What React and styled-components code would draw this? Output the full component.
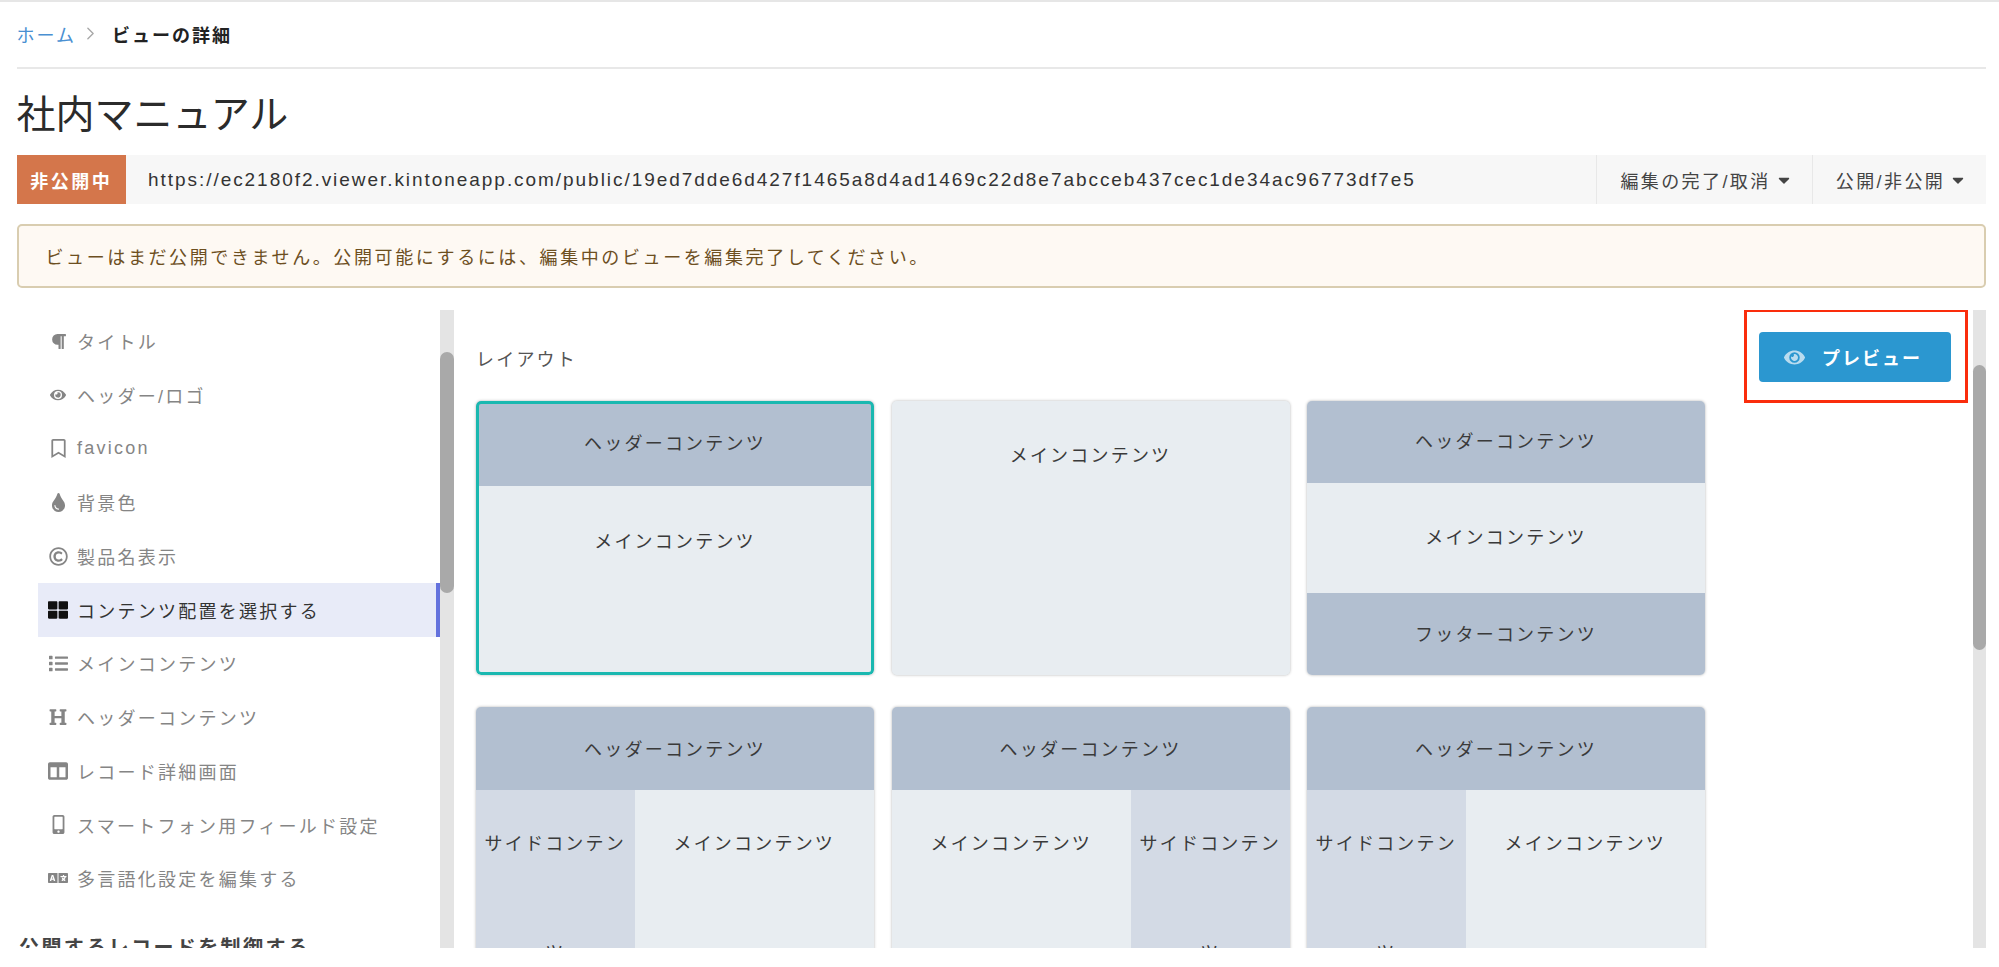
import React from 'react';
import styled, { createGlobalStyle } from 'styled-components';
import { ChevronRight } from 'lucide-react';
import {
  FaParagraph, FaEye, FaRegBookmark, FaTint, FaRegCopyright, FaThLarge,
  FaList, FaHeading, FaColumns, FaMobileAlt, FaLanguage, FaCaretDown,
} from 'react-icons/fa';

const Global = createGlobalStyle`
  html, body { margin: 0; padding: 0; background: #fff; }
  body { font-family: "Liberation Sans", "Noto Sans CJK JP", sans-serif; color: #333; }
  * { box-sizing: border-box; }
`;

const Page = styled.div`
  width: 1999px;
  height: 967px;
  overflow: hidden;
  border-top: 2px solid #e6e6e6;
  padding: 0 13px 0 16.5px;
`;
const Breadcrumb = styled.nav`
  height: 67px;
  border-bottom: 2px solid #e8e8e8;
  display: flex;
  align-items: center;
  font-size: 18px;
  padding-bottom: 2px;
`;
const CrumbLink = styled.a`
  color: #4a90d2;
  letter-spacing: 2px;
`;
const CrumbSep = styled.span`
  display: flex;
  color: #a8a8a8;
  margin: 0 11px 0 4px;
`;
const CrumbCurrent = styled.strong`
  color: #222;
  font-weight: 700;
  letter-spacing: 2px;
`;
const Title = styled.h1`
  margin: 0;
  height: 86px;
  padding-bottom: 2px;
  display: flex;
  align-items: center;
  font-size: 39px;
  font-weight: 400;
  color: #2b2b2b;
`;
const UrlBar = styled.div`
  height: 49px;
  display: flex;
  align-items: stretch;
  background: #f7f7f7;
`;
const StatusBadge = styled.div`
  width: 109.5px;
  background: #d4764b;
  color: #fff;
  font-size: 18px;
  font-weight: 700;
  letter-spacing: 2.5px;
  display: flex;
  align-items: center;
  justify-content: center;
`;
const UrlText = styled.div`
  flex: 1;
  padding-left: 22px;
  display: flex;
  align-items: center;
  font-size: 19px;
  letter-spacing: 1.95px;
  color: #333;
  white-space: nowrap;
`;
const BarButton = styled.div`
  width: ${(p) => p.$width}px;
  border-left: 1px solid #e8e8e8;
  padding-left: 4px;
  display: flex;
  align-items: center;
  justify-content: center;
  gap: 4px;
  font-size: 18px;
  letter-spacing: 2.4px;
  color: #444;
`;
const Alert = styled.div`
  height: 64px;
  margin-top: 20px;
  background: #fef9f3;
  border: 2px solid #d9cdb0;
  border-radius: 5px;
  padding-left: 27px;
  display: flex;
  align-items: center;
  font-size: 18px;
  letter-spacing: 2.6px;
  color: #6d4f1f;
`;
const Workspace = styled.div`
  margin-top: 22px;
  height: 638px;
  display: flex;
`;
const Sidebar = styled.aside`
  width: 423.5px;
  overflow: hidden;
  padding-top: 4.5px;
`;
const NavItem = styled.div`
  margin-left: 21.5px;
  height: 53.7px;
  display: flex;
  align-items: center;
  padding-left: 10px;
  font-size: 18px;
  letter-spacing: 2.25px;
  color: ${(p) => (p.$active ? '#333' : '#858585')};
  background: ${(p) => (p.$active ? '#e8ebf8' : 'transparent')};
  border-right: ${(p) => (p.$active ? '4px solid #6472dd' : 'none')};
`;
const NavIcon = styled.span`
  width: 20px;
  margin-right: 9px;
  display: flex;
  justify-content: center;
  font-size: ${(p) => p.$size || 17}px;
  color: ${(p) => (p.$active ? '#111' : '#858585')};
`;
const SideHeading = styled.div`
  margin: 30px 0 0 2.5px;
  font-size: 20px;
  line-height: 26px;
  font-weight: 700;
  letter-spacing: 2.4px;
  color: #444;
  white-space: nowrap;
`;
const Track = styled.div`
  width: ${(p) => p.$width}px;
  flex: none;
  background: #e4e4e4;
  padding-top: ${(p) => p.$top}px;
`;
const Thumb = styled.div`
  height: ${(p) => p.$height}px;
  background: #a9a9a9;
  border-radius: 7px;
`;
const Main = styled.main`
  flex: 1;
  min-width: 0;
  overflow: hidden;
  display: flex;
  justify-content: space-between;
  padding-left: 22px;
`;
const Content = styled.div`
  width: 1230px;
`;
const SectionLabel = styled.div`
  height: 91px;
  padding: 37px 0 0 0;
  font-size: 18px;
  line-height: 26px;
  letter-spacing: 2.2px;
  color: #555;
`;
const LayoutGrid = styled.div`
  display: grid;
  grid-template-columns: repeat(3, 398px);
  grid-auto-rows: 274px;
  column-gap: 17.5px;
  row-gap: 32px;
`;
const Card = styled.div`
  position: relative;
  border-radius: 5px;
  overflow: hidden;
  display: flex;
  flex-direction: column;
  background: #e8edf1;
  box-shadow: 0 0 3px rgba(0, 0, 0, 0.3);
  ${(p) => p.$selected && `
    &::after {
      content: '';
      position: absolute;
      inset: 0;
      border: 3px solid #1ab8b0;
      border-radius: 5px;
    }
  `}
`;
const Bar = styled.div`
  height: ${(p) => p.$h}px;
  flex: none;
  line-height: ${(p) => p.$lh}px;
  text-align: center;
  background: #b2bfd0;
  font-size: 18px;
  letter-spacing: 2.2px;
  color: #3a3a3a;
`;
const Cell = styled.div`
  flex: ${(p) => (p.$side ? '0 0 158.5px' : '1')};
  min-width: 0;
  line-height: ${(p) => p.$lh || 109}px;
  text-align: center;
  background: ${(p) => (p.$side ? '#d3dae5' : '#e8edf1')};
  font-size: 18px;
  letter-spacing: 2.2px;
  color: #3a3a3a;
`;
const CellRow = styled.div`
  flex: 1;
  min-height: 0;
  display: flex;
`;
const Highlight = styled.div`
  width: 224px;
  height: 94px;
  margin: -1px 5px 0 0;
  flex: none;
  border: 3px solid #fa2d0c;
  padding: 20px 0 0 12px;
`;
const PreviewButton = styled.button`
  width: 192px;
  height: 50px;
  border: 0;
  border-radius: 4px;
  background: #2b97d0;
  color: #fff;
  font: 700 18px "Liberation Sans", "Noto Sans CJK JP", sans-serif;
  letter-spacing: 2px;
  display: flex;
  align-items: center;
  padding-left: 25px;
  gap: 17px;
`;
const EyeIcon = styled(FaEye)`
  font-size: 21px;
  color: #b9dcef;
`;

const navItems = [
  ['タイトル', FaParagraph, 17],
  ['ヘッダー/ロゴ', FaEye, 16],
  ['favicon', FaRegBookmark, 19],
  ['背景色', FaTint, 19],
  ['製品名表示', FaRegCopyright, 19],
  ['コンテンツ配置を選択する', FaThLarge, 20, true],
  ['メインコンテンツ', FaList, 19],
  ['ヘッダーコンテンツ', FaHeading, 18],
  ['レコード詳細画面', FaColumns, 20],
  ['スマートフォン用フィールド設定', FaMobileAlt, 19],
  ['多言語化設定を編集する', FaLanguage, 24],
];

const H = 'ヘッダーコンテンツ';
const M = 'メインコンテンツ';
const S = 'サイドコンテンツ';
const URL = 'https://ec2180f2.viewer.kintoneapp.com/public/19ed7dde6d427f1465a8d4ad1469c22d8e7abcceb437cec1de34ac96773df7e5';

const HeaderRow = () => <Bar $h={83} $lh={87}>{H}</Bar>;

export default function App() {
  return (
    <Page>
      <Global />
      <Breadcrumb>
        <CrumbLink>ホーム</CrumbLink>
        <CrumbSep><ChevronRight size={21} strokeWidth={1.6} /></CrumbSep>
        <CrumbCurrent>ビューの詳細</CrumbCurrent>
      </Breadcrumb>
      <Title>社内マニュアル</Title>
      <UrlBar>
        <StatusBadge>非公開中</StatusBadge>
        <UrlText>{URL}</UrlText>
        <BarButton $width={216}>編集の完了/取消 <FaCaretDown size={18} /></BarButton>
        <BarButton $width={174}>公開/非公開 <FaCaretDown size={18} /></BarButton>
      </UrlBar>
      <Alert>ビューはまだ公開できません。公開可能にするには、編集中のビューを編集完了してください。</Alert>
      <Workspace>
        <Sidebar>
          {navItems.map(([label, Icon, size, active]) => (
            <NavItem key={label} $active={active}>
              <NavIcon $size={size} $active={active}><Icon /></NavIcon>
              {label}
            </NavItem>
          ))}
          <SideHeading>公開するレコードを制御する</SideHeading>
        </Sidebar>
        <Track $width={14} $top={42}><Thumb $height={241} /></Track>
        <Main>
          <Content>
            <SectionLabel>レイアウト</SectionLabel>
            <LayoutGrid>
              <Card $selected>
                <Bar $h={85} $lh={87}>{H}</Bar>
                <Cell $lh={112}>{M}</Cell>
              </Card>
              <Card><Cell $lh={110}>{M}</Cell></Card>
              <Card>
                <Bar $h={81.5} $lh={83}>{H}</Bar>
                <Cell $lh={110}>{M}</Cell>
                <Bar $h={83.5} $lh={84}>フッターコンテンツ</Bar>
              </Card>
              <Card>
                <HeaderRow />
                <CellRow><Cell $side>{S}</Cell><Cell>{M}</Cell></CellRow>
              </Card>
              <Card>
                <HeaderRow />
                <CellRow><Cell>{M}</Cell><Cell $side>{S}</Cell></CellRow>
              </Card>
              <Card>
                <HeaderRow />
                <CellRow><Cell $side>{S}</Cell><Cell>{M}</Cell></CellRow>
              </Card>
            </LayoutGrid>
          </Content>
          <Highlight>
            <PreviewButton><EyeIcon />プレビュー</PreviewButton>
          </Highlight>
        </Main>
        <Track $width={13} $top={55}><Thumb $height={285} /></Track>
      </Workspace>
    </Page>
  );
}
